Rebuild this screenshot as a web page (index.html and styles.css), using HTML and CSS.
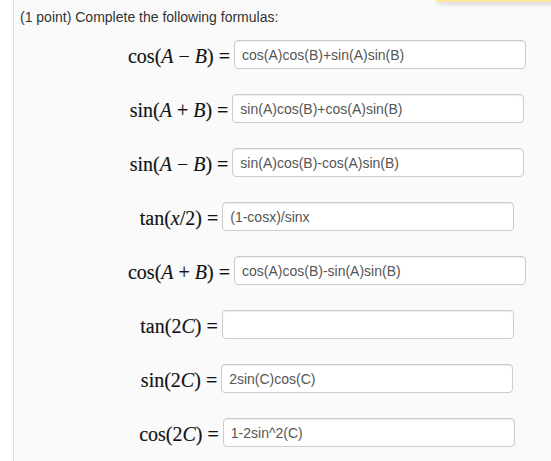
FILE: index.html
```html
<!DOCTYPE html>
<html lang="en">
<head>
    <meta charset="UTF-8">
    <meta name="viewport" content="width=device-width, initial-scale=1.0">
    <title>Problem 1</title>
    <link rel="stylesheet" href="styles.css">
</head>
<body>
    <div class="message-tab"></div>

    <div class="problem">
        <p class="prompt">(1 point) Complete the following formulas:</p>

        <div class="formulas">
            <div class="formula">
                <span class="lhs"><span class="fn">cos</span>(<i>A</i><span class="bin">−</span><i>B</i>)<span class="rel">=</span></span>
                <input class="answer" type="text" value="cos(A)cos(B)+sin(A)sin(B)">
            </div>

            <div class="formula">
                <span class="lhs"><span class="fn">sin</span>(<i>A</i><span class="bin">+</span><i>B</i>)<span class="rel">=</span></span>
                <input class="answer" type="text" value="sin(A)cos(B)+cos(A)sin(B)">
            </div>

            <div class="formula">
                <span class="lhs"><span class="fn">sin</span>(<i>A</i><span class="bin">−</span><i>B</i>)<span class="rel">=</span></span>
                <input class="answer" type="text" value="sin(A)cos(B)-cos(A)sin(B)">
            </div>

            <div class="formula">
                <span class="lhs"><span class="fn">tan</span>(<i>x</i>/2)<span class="rel">=</span></span>
                <input class="answer" type="text" value="(1-cosx)/sinx">
            </div>

            <div class="formula">
                <span class="lhs"><span class="fn">cos</span>(<i>A</i><span class="bin">+</span><i>B</i>)<span class="rel">=</span></span>
                <input class="answer" type="text" value="cos(A)cos(B)-sin(A)sin(B)">
            </div>

            <div class="formula">
                <span class="lhs"><span class="fn">tan</span>(2<i>C</i>)<span class="rel">=</span></span>
                <input class="answer" type="text" value="">
            </div>

            <div class="formula">
                <span class="lhs"><span class="fn">sin</span>(2<i>C</i>)<span class="rel">=</span></span>
                <input class="answer" type="text" value="2sin(C)cos(C)">
            </div>

            <div class="formula">
                <span class="lhs"><span class="fn">cos</span>(2<i>C</i>)<span class="rel">=</span></span>
                <input class="answer" type="text" value="1-2sin^2(C)">
            </div>
        </div>
    </div>
</body>
</html>
```

FILE: styles.css
```css
* {
    margin: 0;
    padding: 0;
    box-sizing: border-box;
}

body {
    font-family: 'Liberation Sans', Arial, sans-serif;
    font-size: 14px;
    background: #fff;
    color: #333;
    overflow: hidden;
    height: 461px;
}

.message-tab {
    position: absolute;
    top: 0;
    left: 436px;
    width: 140px;
    height: 2px;
    background: #fde89e;
    box-shadow: 2px 2px 4px rgba(0, 0, 0, 0.25);
}

.problem {
    margin-left: 13px;
    border-left: 1px solid #ddd;
    background: #fafafa;
    height: 461px;
    padding-top: 9px;
}

.prompt {
    padding-left: 6px;
    line-height: 16px;
    color: #333;
}

.formulas {
    width: 626px;
    padding-top: 15px;
}

.formula {
    display: flex;
    justify-content: center;
    align-items: center;
    height: 29px;
    margin-bottom: 25px;
}

.lhs {
    font-family: 'Liberation Serif', 'Times New Roman', serif;
    font-size: 20px;
    color: #111;
    -webkit-text-stroke: 0.15px #111;
    margin-right: 4px;
    padding-top: 3px;
    white-space: nowrap;
}

.lhs i {
    font-style: italic;
}

.bin {
    margin: 0 5px;
}

.rel {
    margin-left: 5px;
}

.answer {
    width: 292px;
    height: 29px;
    padding: 4px 7px;
    font-family: 'Liberation Sans', Arial, sans-serif;
    font-size: 14px;
    color: #555;
    background: #fff;
    border: 1px solid #ccc;
    border-radius: 4px;
    box-shadow: inset 0 1px 1px rgba(0, 0, 0, 0.075);
}
```
